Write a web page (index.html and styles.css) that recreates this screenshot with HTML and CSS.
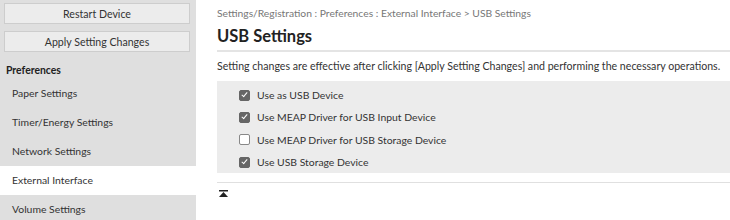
FILE: index.html
```html
<!DOCTYPE html>
<html lang="en">
<head>
  <meta charset="UTF-8">
  <title>USB Settings</title>
  <link rel="stylesheet" href="styles.css">
</head>
<body>
  <div class="layout">
    <div class="sidebar">
      <button class="side-btn">Restart Device</button>
      <button class="side-btn">Apply Setting Changes</button>
      <div class="menu-title">Preferences</div>
      <ul class="menu">
        <li>Paper Settings</li>
        <li>Timer/Energy Settings</li>
        <li>Network Settings</li>
        <li class="active">External Interface</li>
        <li>Volume Settings</li>
      </ul>
    </div>

    <div class="main">
      <div class="breadcrumb">Settings/Registration : Preferences : External Interface &gt; USB Settings</div>
      <h1>USB Settings</h1>
      <p class="note">Setting changes are effective after clicking [Apply Setting Changes] and performing the necessary operations.</p>

      <div class="options">
        <label class="option"><span class="box checked"></span>Use as USB Device</label>
        <label class="option"><span class="box checked"></span>Use MEAP Driver for USB Input Device</label>
        <label class="option"><span class="box"></span>Use MEAP Driver for USB Storage Device</label>
        <label class="option"><span class="box checked"></span>Use USB Storage Device</label>
      </div>

      <div class="to-top">
        <svg width="9" height="7" viewBox="0 0 9 7">
          <rect x="0" y="0" width="9" height="1.5" fill="#222"/>
          <path d="M4.5 2 L9 7 L0 7 Z" fill="#222"/>
        </svg>
      </div>
    </div>
  </div>
</body>
</html>
```

FILE: styles.css
```css
body {
  margin: 0;
  font-family: Lato, "Open Sans", sans-serif;
  font-size: 10.4px;
  color: #333;
  background-color: white;
}

.layout {
  display: flex;
  height: 220px;
  overflow: hidden;
}

.sidebar {
  width: 196px;
  flex-shrink: 0;
  background-color: #dfdfdf;
  padding-top: 3px;
}

.side-btn {
  display: block;
  width: 186px;
  height: 21px;
  margin: 0 0 7px 4px;
  background-color: #ececec;
  border: 1px solid #cdcdcd;
  font-family: Lato, "Open Sans", sans-serif;
  font-size: 10.6px;
  color: #333;
  padding: 0;
}

.menu-title {
  font-weight: bold;
  color: #222;
  padding: 2px 0 0 6px;
  height: 18px;
  line-height: 18px;
}

.menu {
  list-style: none;
  margin: 0;
  padding: 0;
}

.menu li {
  height: 29px;
  line-height: 29px;
  padding-left: 12px;
}

.menu li.active {
  background-color: white;
}

.main {
  flex: 1;
  padding-left: 21px;
}

.breadcrumb {
  color: #777;
  font-size: 10.3px;
  margin-top: 5px;
  height: 16px;
  line-height: 16px;
}

h1 {
  margin: 4px 0 0 0;
  font-size: 16.5px;
  color: #222;
  line-height: 22px;
  padding-bottom: 3px;
  border-bottom: 2px solid #e4e4e4;
}

.note {
  margin: 6px 0 0 0;
  line-height: 16px;
  font-size: 10.6px;
  white-space: nowrap;
}

.options {
  margin-top: 7px;
  background-color: #ececec;
  padding: 3px 0 0 22px;
}

.option {
  display: flex;
  align-items: center;
  height: 22.3px;
}

.box {
  width: 9px;
  height: 9px;
  border: 1px solid #888;
  border-radius: 2px;
  background-color: white;
  margin-right: 7px;
  position: relative;
}

.box.checked {
  background-color: #666;
  border-color: #666;
}

.box.checked::after {
  content: "";
  position: absolute;
  left: 3px;
  top: 0px;
  width: 2px;
  height: 5px;
  border: solid white;
  border-width: 0 1.5px 1.5px 0;
  transform: rotate(40deg);
}

.to-top {
  margin-top: 9px;
  border-top: 1px solid #e0e0e0;
  padding: 4px 0 0 2px;
}
```
